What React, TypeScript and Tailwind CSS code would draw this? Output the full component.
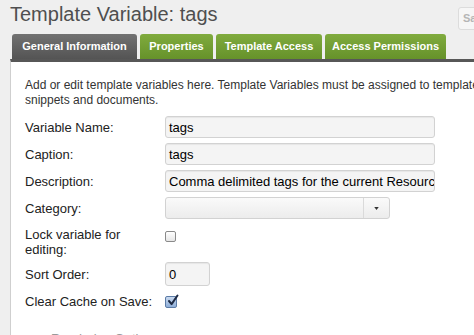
import { useState } from "react";

const tabs = [
  { label: "General Information", w: "w-[125px]" },
  { label: "Properties", w: "w-[73px]" },
  { label: "Template Access", w: "w-[106px]" },
  { label: "Access Permissions", w: "w-[121px]" },
];

function Box({ checked }: { checked?: boolean }) {
  return checked ? (
    <span className="relative flex h-[12px] w-[12px] items-center justify-center rounded-[2px] border border-[#5b7ba6] bg-gradient-to-b from-[#c9d9ef] to-[#8eaed8]">
      <svg viewBox="0 0 12 12" className="absolute -top-[3px] left-[1px] h-[13px] w-[12px]">
        <path d="M2 6.5 L4.6 9.6 L10.5 1" fill="none" stroke="#1d2a44" strokeWidth="2" strokeLinecap="round" strokeLinejoin="round" />
      </svg>
    </span>
  ) : (
    <span className="block h-[11px] w-[11px] rounded-[2px] border border-[#8a8a8a] bg-gradient-to-b from-white to-[#e6e6e6]" />
  );
}

function TextField({ value, w = "w-[270px]", h = "h-[22px]" }: { value: string; w?: string; h?: string }) {
  return (
    <div
      className={`${w} ${h} flex items-center overflow-hidden whitespace-nowrap rounded-[3px] border border-[#d2d2d2] bg-[#f4f4f4] px-[3px] text-[13px] text-black shadow-[inset_0_1px_1px_rgba(0,0,0,0.06)]`}
    >
      {value}
    </div>
  );
}

export default function App() {
  const [active] = useState(0);

  return (
    <div className="h-[335px] w-[474px] overflow-hidden bg-[#efefef] font-['Liberation_Sans',Arial,sans-serif]">
      <div className="w-[560px] pl-[10px] pt-[2px]">
        <div className="flex items-start justify-between">
          <h1 className="text-[20px] leading-[24px] text-[#4f4f4f]">Template Variable: tags</h1>
          <div className="ml-auto mr-[54px] mt-[5px] flex h-[23px] w-[48px] items-center rounded-[3px] border border-[#dcdcdc] bg-[#f6f6f6] pl-[4px] text-[11px] font-bold text-[#b5b5b5]">
            Save
          </div>
        </div>

        <div className="mt-[4px] flex gap-[3px] pl-[2px]">
          {tabs.map((t, i) => (
            <div
              key={t.label}
              className={`${t.w} flex h-[25px] items-center justify-center rounded-t-[3px] text-[11px] font-bold text-white ${
                i === active
                  ? "bg-gradient-to-b from-[#727272] to-[#545454] text-[#f2f2f2]"
                  : "bg-gradient-to-b from-[#80ab3e] to-[#66922a]"
              }`}
            >
              {t.label}
            </div>
          ))}
        </div>

        <div className="border-l border-t-[3px] border-l-[#cfcfcf] border-t-[#575757] bg-white pb-[20px] pl-[14px] pt-[16px] text-[13px] leading-[15px] text-[#222]">
          <p className="whitespace-nowrap text-[12px] text-[#333]">
            Add or edit template variables here. Template Variables must be assigned to templates,
            <br />
            snippets and documents.
          </p>

          <div className="mt-[8px] flex flex-col gap-[5px]">
            <div className="flex items-center">
              <span className="w-[140px]">Variable Name:</span>
              <TextField value="tags" />
            </div>
            <div className="flex items-center">
              <span className="w-[140px]">Caption:</span>
              <TextField value="tags" />
            </div>
            <div className="flex items-center">
              <span className="w-[140px]">Description:</span>
              <TextField value="Comma delimited tags for the current Resource" />
            </div>
            <div className="flex items-center">
              <span className="w-[140px]">Category:</span>
              <div className="flex h-[22px] w-[225px] rounded-[3px] border border-[#d2d2d2] bg-gradient-to-b from-[#fafafa] to-[#ececec]">
                <div className="flex-1" />
                <div className="flex w-[26px] items-center justify-center border-l border-[#dadada]">
                  <svg viewBox="0 0 6 4" className="h-[3px] w-[5px]">
                    <path d="M0 0 H6 L3 4 Z" fill="#333" />
                  </svg>
                </div>
              </div>
            </div>
          </div>

          <div className="mt-[7px] flex items-start">
            <span className="w-[140px] pt-[1px]">
              Lock variable for
              <br />
              editing:
            </span>
            <div className="pt-[5px]">
              <Box />
            </div>
          </div>

          <div className="mt-[5px] flex items-center">
            <span className="w-[140px]">Sort Order:</span>
            <TextField value="0" w="w-[45px]" h="h-[24px]" />
          </div>

          <div className="mt-[8px] flex items-center">
            <span className="w-[140px]">Clear Cache on Save:</span>
            <Box checked />
          </div>

          <div className="mt-[22px] flex items-center gap-[4px] pl-[13px] text-[#9a9a9a]">
            <span className="block h-[8px] w-[9px] bg-[#cfcfcf]" />
            <span>Rendering Options</span>
          </div>
        </div>
      </div>
    </div>
  );
}
